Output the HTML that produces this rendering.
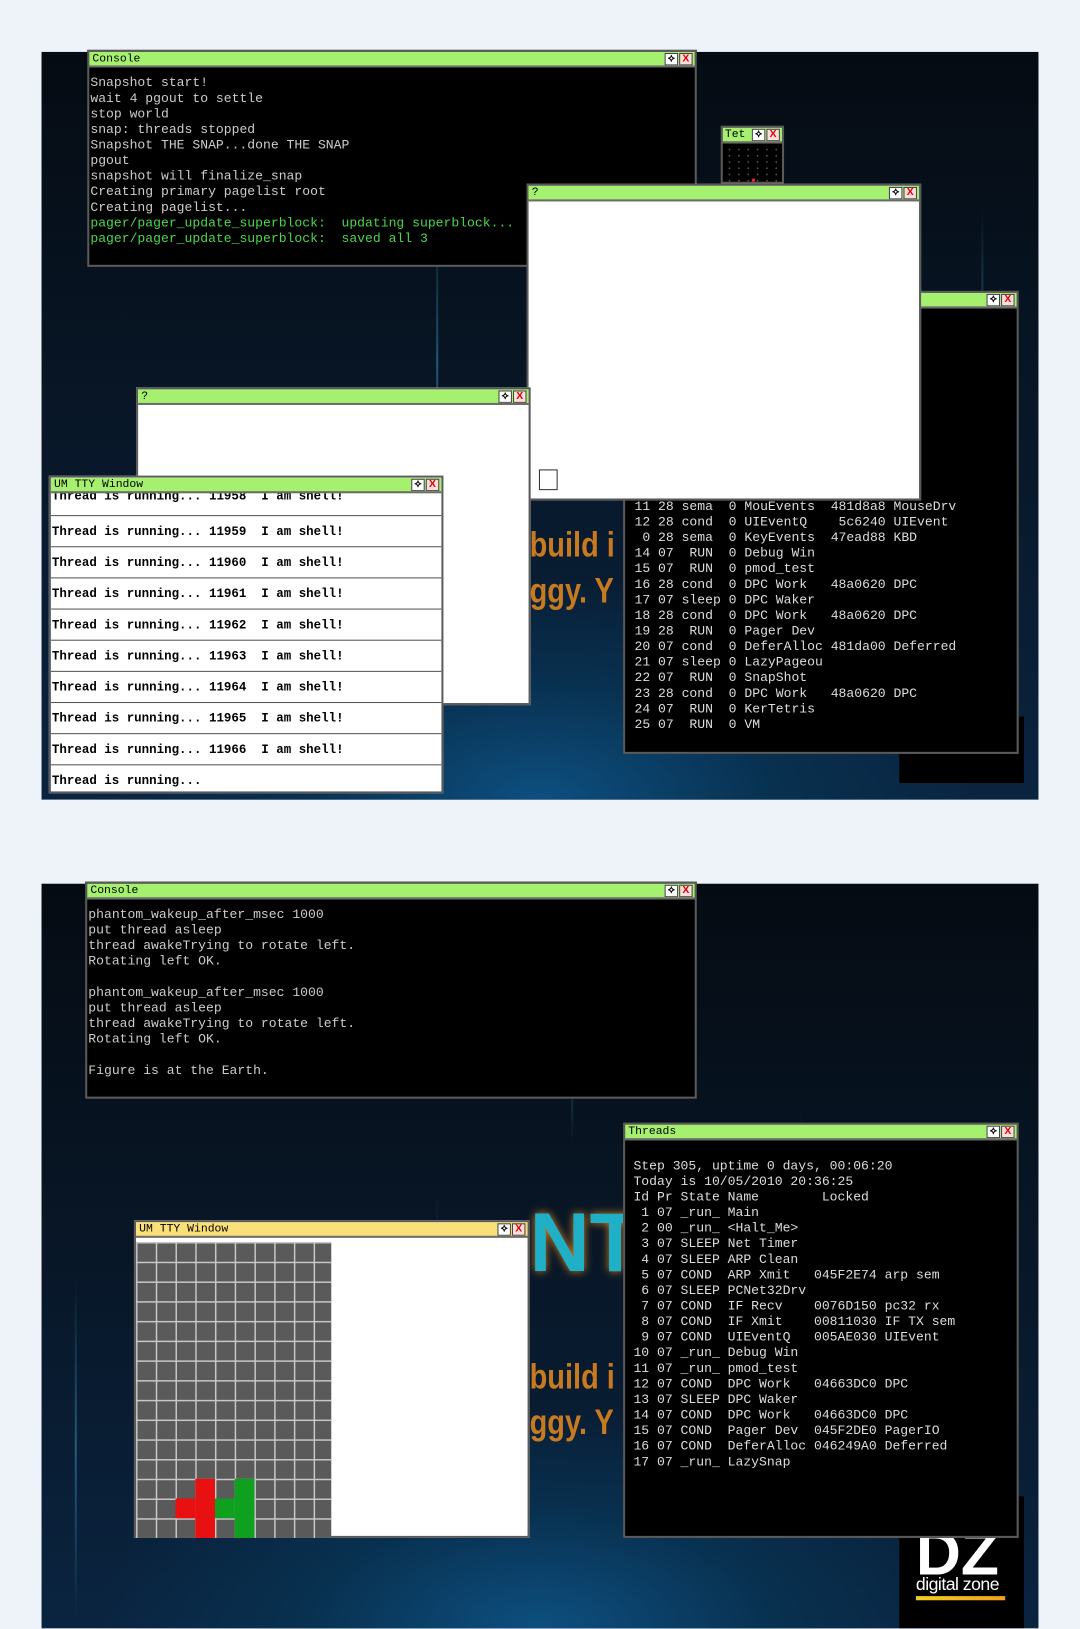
<!DOCTYPE html>
<html><head><meta charset="utf-8"><style>
*{margin:0;padding:0;box-sizing:border-box}
html,body{width:1080px;height:1629px;overflow:hidden;background:#eef2f9}
#s{position:absolute;left:0;top:0;width:1040px;height:1568px;transform:scale(1.03846);transform-origin:0 0}
.panel{position:absolute;left:40px;width:960px;overflow:hidden;
background:radial-gradient(ellipse 60% 40% at 50% 100%,#0d4f80 0%,#08304f 40%,rgba(5,20,35,0) 75%),linear-gradient(180deg,#050b12 0%,#08182a 55%,#0a2440 100%)}
.streak{position:absolute;width:2px;background:linear-gradient(180deg,rgba(60,150,190,0),rgba(60,150,190,.5),rgba(60,150,190,0))}
.win{position:absolute;border:2px solid #5a5a5a;background:#000}
.tb{position:absolute;left:0;right:0;top:0;height:15px;background:#a6f070;border-bottom:2px solid #6c6c6c;font:11px "Liberation Mono",monospace;color:#000;padding-left:3px;line-height:14px;white-space:nowrap;overflow:hidden}
.tb.y{background:#fae078}
.btn{position:absolute;top:1px;width:13px;height:12px;border:1px solid #444;background:#fff;font:bold 10px "Liberation Sans",sans-serif;text-align:center;line-height:10px}
.bp{right:16px}
.bx{right:2px;background:#fdd;color:#d00}
.txt{position:absolute;font:12.6px "Liberation Mono",monospace;line-height:15px;white-space:pre;color:#ccc}
.g{color:#4cd64c}
.tty{position:absolute;left:0;right:0;background:#fff;font:bold 12px "Liberation Mono",monospace;color:#000;white-space:pre}
.row{height:30px;border-bottom:1.5px solid #555;line-height:30px;padding-left:1px}
.logo{position:absolute;background:#000}
.big{position:absolute;left:470px;font:bold 34px 'Liberation Sans',sans-serif;color:#c87a20;transform:scaleX(.82);transform-origin:0 0}
</style></head><body><div id="s">

<div class="panel" style="top:50px;height:720px">
 <div class="streak" style="left:380px;top:150px;height:300px"></div>
 <div class="streak" style="left:250px;top:380px;height:200px"></div>
 <div class="streak" style="left:960px;top:60px;height:200px"></div>
 <div class="streak" style="left:905px;top:150px;height:300px"></div>
 <div class="big" style="top:456px">build i</div>
 <div class="big" style="top:500px">ggy. Y</div>
 <div class="logo" style="left:826px;top:640px;width:120px;height:64px"><div style="position:absolute;left:16px;top:30px;width:88px;height:6px;background:#f0c020"></div></div>
</div>

<div class="win" style="left:84px;top:48px;width:587px;height:209px">
 <div class="tb">Console<span class="btn bp">⟡</span><span class="btn bx">X</span></div>
 <div class="txt" style="left:1px;top:23px">Snapshot start!
wait 4 pgout to settle
stop world
snap: threads stopped
Snapshot THE SNAP...done THE SNAP
pgout
snapshot will finalize_snap
Creating primary pagelist root
Creating pagelist...
<span class="g">pager/pager_update_superblock:  updating superblock...
pager/pager_update_superblock:  saved all 3</span></div>
</div>

<div class="win" style="left:694px;top:121px;width:61px;height:56px">
 <div class="tb" style="padding-left:2px">Tet<span class="btn bp" style="right:16px">⟡</span><span class="btn bx">X</span></div>
 <div style="position:absolute;left:2px;top:18px;width:54px;height:34px;background-image:radial-gradient(circle,#555 0.8px,transparent 1px);background-size:9px 6px"></div>
 <div style="position:absolute;left:28px;top:49px;width:3px;height:3px;background:#e22"></div>
</div>

<div class="win" style="left:600px;top:280px;width:381px;height:446px">
 <div class="tb"><span class="btn bp">⟡</span><span class="btn bx">X</span></div>
 <div class="txt" style="left:9px;top:34px;color:#ddd">                              y



                               sem
                              blk



                             2 rx
                             TX sem
11 28 sema  0 MouEvents  481d8a8 MouseDrv
12 28 cond  0 UIEventQ    5c6240 UIEvent
 0 28 sema  0 KeyEvents  47ead88 KBD
14 07  RUN  0 Debug Win
15 07  RUN  0 pmod_test
16 28 cond  0 DPC Work   48a0620 DPC
17 07 sleep 0 DPC Waker
18 28 cond  0 DPC Work   48a0620 DPC
19 28  RUN  0 Pager Dev
20 07 cond  0 DeferAlloc 481da00 Deferred
21 07 sleep 0 LazyPageou
22 07  RUN  0 SnapShot
23 28 cond  0 DPC Work   48a0620 DPC
24 07  RUN  0 KerTetris
25 07  RUN  0 VM</div>
</div>

<div class="win" style="left:507px;top:177px;width:380px;height:305px;background:#fff">
 <div class="tb">?<span class="btn bp">⟡</span><span class="btn bx">X</span></div>
 <div style="position:absolute;left:10px;top:273px;width:18px;height:20px;border:1.5px solid #333;background:#fff"></div>
</div>

<div class="win" style="left:131px;top:373px;width:380px;height:306px;background:#fff">
 <div class="tb">?<span class="btn bp">⟡</span><span class="btn bx">X</span></div>
</div>

<div class="win" style="left:47px;top:458px;width:380px;height:306px;background:#fff;overflow:hidden">
 <div class="tty" style="top:-7px">
<div class="row" style="line-height:22px">Thread is running... 11958  I am shell!</div><div class="row">Thread is running... 11959  I am shell!</div><div class="row">Thread is running... 11960  I am shell!</div><div class="row">Thread is running... 11961  I am shell!</div><div class="row">Thread is running... 11962  I am shell!</div><div class="row">Thread is running... 11963  I am shell!</div><div class="row">Thread is running... 11964  I am shell!</div><div class="row">Thread is running... 11965  I am shell!</div><div class="row">Thread is running... 11966  I am shell!</div><div class="row" style="border:0">Thread is running...</div></div>
 <div class="tb">UM TTY Window<span class="btn bp">⟡</span><span class="btn bx">X</span></div>
</div>

<div class="panel" style="top:851px;height:717px">
 <div class="streak" style="left:380px;top:300px;height:300px"></div>
 <div class="streak" style="left:32px;top:380px;height:330px"></div>
 <div class="streak" style="left:960px;top:60px;height:260px"></div>
 <div class="streak" style="left:510px;top:50px;height:200px"></div>
 <div class="streak" style="left:730px;top:220px;height:300px"></div>
 <div style="position:absolute;left:470px;top:300px;font:bold 80px 'Liberation Sans',sans-serif;color:#1fb0c8;text-shadow:0 0 8px #d08020">NTC</div>
 <div class="big" style="top:456px">build i</div>
 <div class="big" style="top:500px">ggy. Y</div>
 <div class="logo" style="left:826px;top:590px;width:120px;height:127px">
  <div style="position:absolute;left:16px;top:30px;font:bold 60px 'Liberation Sans',sans-serif;color:#fff;line-height:50px">DZ</div>
  <div style="position:absolute;left:16px;top:75px;font:17px 'Liberation Sans',sans-serif;color:#fff;letter-spacing:-.5px">digital zone</div>
  <div style="position:absolute;left:16px;top:96px;width:86px;height:4px;background:linear-gradient(90deg,#f0d020,#f0a020)"></div>
 </div>
</div>

<div class="win" style="left:82px;top:849px;width:589px;height:209px">
 <div class="tb">Console<span class="btn bp">⟡</span><span class="btn bx">X</span></div>
 <div class="txt" style="left:1px;top:23px">phantom_wakeup_after_msec 1000
put thread asleep
thread awakeTrying to rotate left.
Rotating left OK.

phantom_wakeup_after_msec 1000
put thread asleep
thread awakeTrying to rotate left.
Rotating left OK.

Figure is at the Earth.</div>
</div>

<div class="win" style="left:600px;top:1081px;width:381px;height:400px">
 <div class="tb">Threads<span class="btn bp">⟡</span><span class="btn bx">X</span></div>
 <div class="txt" style="left:8px;top:33px;color:#ddd">Step 305, uptime 0 days, 00:06:20
Today is 10/05/2010 20:36:25
Id Pr State Name        Locked
 1 07 _run_ Main
 2 00 _run_ &lt;Halt_Me&gt;
 3 07 SLEEP Net Timer
 4 07 SLEEP ARP Clean
 5 07 COND  ARP Xmit   045F2E74 arp sem
 6 07 SLEEP PCNet32Drv
 7 07 COND  IF Recv    0076D150 pc32 rx
 8 07 COND  IF Xmit    00811030 IF TX sem
 9 07 COND  UIEventQ   005AE030 UIEvent
10 07 _run_ Debug Win
11 07 _run_ pmod_test
12 07 COND  DPC Work   04663DC0 DPC
13 07 SLEEP DPC Waker
14 07 COND  DPC Work   04663DC0 DPC
15 07 COND  Pager Dev  045F2DE0 PagerIO
16 07 COND  DeferAlloc 046249A0 Deferred
17 07 _run_ LazySnap</div>
</div>

<div class="win" style="left:129px;top:1175px;width:381px;height:306px;background:#fff">
 <div class="tb y">UM TTY Window<span class="btn bp">⟡</span><span class="btn bx">X</span></div>
 <div style="position:absolute;left:0;top:19px;width:188px;height:285px;background-color:#5a5a5a;background-image:linear-gradient(90deg,#c8c8c8 1.5px,transparent 1.5px),linear-gradient(180deg,#c8c8c8 1.5px,transparent 1.5px);background-size:19px 19px"></div>
 <div style="position:absolute;left:57px;top:247px;width:19px;height:57px;background:#e81010"></div>
 <div style="position:absolute;left:38px;top:266px;width:19px;height:19px;background:#e81010"></div>
 <div style="position:absolute;left:95px;top:247px;width:19px;height:57px;background:#10a020"></div>
 <div style="position:absolute;left:76px;top:266px;width:19px;height:19px;background:#10a020"></div>
</div>

</div></body></html>
